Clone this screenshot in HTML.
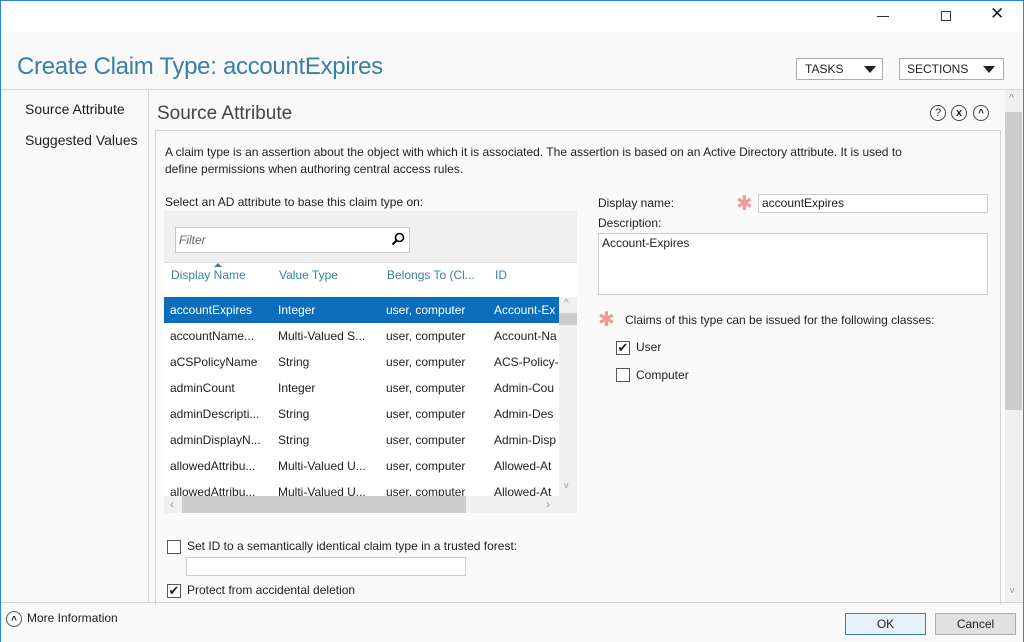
<!DOCTYPE html>
<html><head><style>
*{box-sizing:border-box;margin:0;padding:0}
body{width:1024px;height:642px;overflow:hidden;background:#f9f9f9;font-family:"Segoe UI","Liberation Sans",sans-serif;font-size:12px;color:#1e1e1e;position:relative}
.a{position:absolute}
.frame{left:0;top:0;width:1024px;height:642px;border:1px solid #2b88d8;border-bottom:none;pointer-events:none}
.cb{width:12px;height:12px;border:1px solid #555;background:#fff}
.t{white-space:nowrap}
.row{position:absolute;left:0;width:393px;height:26px;line-height:26px;white-space:nowrap}
.row span{position:absolute;white-space:nowrap}
.tri{position:absolute;width:0;height:0;border-left:6px solid transparent;border-right:6px solid transparent;border-top:7px solid #222}
</style></head><body>
<div class="a" style="left:0;top:0;width:1024px;height:32px;background:#fff"></div>
<div class="a" style="left:877px;top:16px;width:12px;height:1px;background:#333"></div>
<div class="a" style="left:941px;top:11px;width:10px;height:10px;border:1px solid #333"></div>
<div class="a t" style="left:990px;top:4px;font-size:17px">&#10005;</div>
<div class="a t" style="left:17px;top:53px;font-size:24px;color:#3a7fa5;letter-spacing:-0.3px">Create Claim Type: accountExpires</div>
<div class="a" style="left:796px;top:58px;width:87px;height:22px;border:1px solid #adadad;background:#fff"></div>
<div class="a t" style="left:805px;top:62px;font-size:12px">TASKS</div>
<div class="tri" style="left:864px;top:66px"></div>
<div class="a" style="left:899px;top:58px;width:105px;height:22px;border:1px solid #adadad;background:#fff"></div>
<div class="a t" style="left:907px;top:62px;font-size:12px">SECTIONS</div>
<div class="tri" style="left:983px;top:66px"></div>
<div class="a" style="left:0;top:89px;width:1024px;height:1px;background:#d4d4d4"></div>
<div class="a" style="left:148px;top:90px;width:1px;height:512px;background:#d4d4d4"></div>
<div class="a t" style="left:25px;top:101px;font-size:14px">Source Attribute</div>
<div class="a t" style="left:25px;top:132px;font-size:14px">Suggested Values</div>
<div class="a t" style="left:157px;top:103px;font-size:19px;color:#444">Source Attribute</div>
<div class="a" style="left:930px;top:105px;width:16px;height:16px;border:1px solid #444;border-radius:50%;font-size:11px;text-align:center;line-height:14px;background:#fff">?</div>
<div class="a" style="left:951px;top:105px;width:16px;height:16px;border:1px solid #444;border-radius:50%;font-size:11px;font-weight:bold;text-align:center;line-height:14px;background:#fff">x</div>
<div class="a" style="left:973px;top:105px;width:16px;height:16px;border:1px solid #444;border-radius:50%;font-size:10px;font-weight:bold;text-align:center;line-height:16px;background:#fff">^</div>
<div class="a" style="left:1005px;top:90px;width:17px;height:512px;background:#f0f0f0"></div>
<div class="a" style="left:1005px;top:112px;width:17px;height:298px;background:#cdcdcd"></div>
<div class="a t" style="left:1009px;top:93px;font-size:10px;color:#888">^</div>
<div class="a" style="left:155px;top:130px;width:846px;height:475px;border:1px solid #d4d4d4;border-bottom:none;background:#fafafa"></div>
<div class="a" style="left:165px;top:144px;width:770px;font-size:12px;line-height:17px">A claim type is an assertion about the object with which it is associated. The assertion is based on an Active Directory attribute. It is used to define permissions when authoring central access rules.</div>
<div class="a t" style="left:165px;top:195px">Select an AD attribute to base this claim type on:</div>
<div class="a" style="left:164px;top:211px;width:413px;height:302px;background:#f0f0f0"></div>
<div class="a" style="left:175px;top:227px;width:235px;height:26px;border:1px solid #c8c8c8;background:#fff"></div>
<div class="a t" style="left:179px;top:233px;font-style:italic;color:#666">Filter</div>
<svg class="a" style="left:391px;top:232px" width="14" height="14"><circle cx="8.5" cy="5.5" r="4" fill="none" stroke="#000" stroke-width="1.6"/><line x1="5.5" y1="8.5" x2="1.5" y2="12.5" stroke="#000" stroke-width="2"/></svg>
<div class="a" style="left:164px;top:262px;width:413px;height:1px;background:#ddd"></div>
<div class="a" style="left:164px;top:263px;width:413px;height:34px;background:#fff"></div>
<div class="a t" style="left:171px;top:268px;color:#3a7fa5">Display Name</div>
<div class="a t" style="left:279px;top:268px;color:#3a7fa5">Value Type</div>
<div class="a t" style="left:387px;top:268px;color:#3a7fa5">Belongs To (Cl...</div>
<div class="a t" style="left:495px;top:268px;color:#3a7fa5">ID</div>
<div class="a" style="left:214px;top:263px;width:0;height:0;border-left:4px solid transparent;border-right:4px solid transparent;border-bottom:4px solid #3a7fa5"></div>
<div class="a" style="left:164px;top:297px;width:395px;height:199px;background:#fff;overflow:hidden">
<div class="row" style="top:0;width:395px;background:#0a6ebd;color:#fff"><span style="left:6px">accountExpires</span><span style="left:114px">Integer</span><span style="left:222px">user, computer</span><span style="left:330px">Account-Ex</span></div>
<div class="row" style="top:26px"><span style="left:6px">accountName...</span><span style="left:114px">Multi-Valued S...</span><span style="left:222px">user, computer</span><span style="left:330px">Account-Na</span></div>
<div class="row" style="top:52px"><span style="left:6px">aCSPolicyName</span><span style="left:114px">String</span><span style="left:222px">user, computer</span><span style="left:330px">ACS-Policy-</span></div>
<div class="row" style="top:78px"><span style="left:6px">adminCount</span><span style="left:114px">Integer</span><span style="left:222px">user, computer</span><span style="left:330px">Admin-Cou</span></div>
<div class="row" style="top:104px"><span style="left:6px">adminDescripti...</span><span style="left:114px">String</span><span style="left:222px">user, computer</span><span style="left:330px">Admin-Des</span></div>
<div class="row" style="top:130px"><span style="left:6px">adminDisplayN...</span><span style="left:114px">String</span><span style="left:222px">user, computer</span><span style="left:330px">Admin-Disp</span></div>
<div class="row" style="top:156px"><span style="left:6px">allowedAttribu...</span><span style="left:114px">Multi-Valued U...</span><span style="left:222px">user, computer</span><span style="left:330px">Allowed-At</span></div>
<div class="row" style="top:182px"><span style="left:6px">allowedAttribu...</span><span style="left:114px">Multi-Valued U...</span><span style="left:222px">user, computer</span><span style="left:330px">Allowed-At</span></div>
</div>
<div class="a" style="left:559px;top:297px;width:18px;height:199px;background:#f0f0f0"></div>
<div class="a" style="left:559px;top:313px;width:18px;height:12px;background:#cdcdcd"></div>
<div class="a t" style="left:564px;top:298px;font-size:10px;color:#999">^</div>
<div class="a t" style="left:564px;top:480px;font-size:9px;color:#999">v</div>
<div class="a" style="left:164px;top:496px;width:395px;height:17px;background:#f0f0f0"></div>
<div class="a" style="left:182px;top:496px;width:284px;height:17px;background:#cdcdcd"></div>
<div class="a t" style="left:170px;top:497px;font-size:12px;color:#999">&lsaquo;</div>
<div class="a t" style="left:546px;top:497px;font-size:12px;color:#999">&rsaquo;</div>
<div class="a t" style="left:598px;top:196px">Display name:</div>
<div class="a t" style="left:736px;top:191px;font-size:20px;color:#e99">&#10033;</div>
<div class="a" style="left:758px;top:194px;width:230px;height:19px;border:1px solid #ccc;background:#fff"></div>
<div class="a t" style="left:762px;top:196px">accountExpires</div>
<div class="a t" style="left:598px;top:216px">Description:</div>
<div class="a" style="left:598px;top:233px;width:390px;height:62px;border:1px solid #ccc;background:#fff"></div>
<div class="a t" style="left:602px;top:236px">Account-Expires</div>
<div class="a t" style="left:598px;top:307px;font-size:20px;color:#e99">&#10033;</div>
<div class="a t" style="left:625px;top:313px">Claims of this type can be issued for the following classes:</div>
<div class="a cb" style="left:616px;top:341px;width:14px;height:14px;font-size:13px;line-height:11px;text-align:center">&#10004;</div>
<div class="a t" style="left:636px;top:340px">User</div>
<div class="a cb" style="left:616px;top:368px;width:14px;height:14px"></div>
<div class="a t" style="left:636px;top:368px">Computer</div>
<div class="a cb" style="left:167px;top:540px;width:14px;height:14px"></div>
<div class="a t" style="left:187px;top:539px">Set ID to a semantically identical claim type in a trusted forest:</div>
<div class="a" style="left:186px;top:557px;width:280px;height:19px;border:1px solid #ccc;background:#fff"></div>
<div class="a cb" style="left:167px;top:584px;width:14px;height:14px;font-size:13px;line-height:11px;text-align:center">&#10004;</div>
<div class="a t" style="left:187px;top:583px">Protect from accidental deletion</div>
<div class="a t" style="left:1010px;top:585px;font-size:9px;color:#999">v</div>
<div class="a" style="left:0;top:602px;width:1024px;height:1px;background:#d4d4d4"></div>
<div class="a" style="left:6px;top:611px;width:16px;height:16px;border:1px solid #555;border-radius:50%;font-size:10px;font-weight:bold;text-align:center;line-height:17px">^</div>
<div class="a t" style="left:27px;top:611px">More Information</div>
<div class="a" style="left:845px;top:613px;width:81px;height:22px;border:1px solid #3c7fb1;background:#e5f1fb;text-align:center;line-height:20px">OK</div>
<div class="a" style="left:935px;top:613px;width:81px;height:22px;border:1px solid #adadad;background:#e1e1e1;text-align:center;line-height:20px">Cancel</div>
<div class="a frame"></div>
</body></html>
